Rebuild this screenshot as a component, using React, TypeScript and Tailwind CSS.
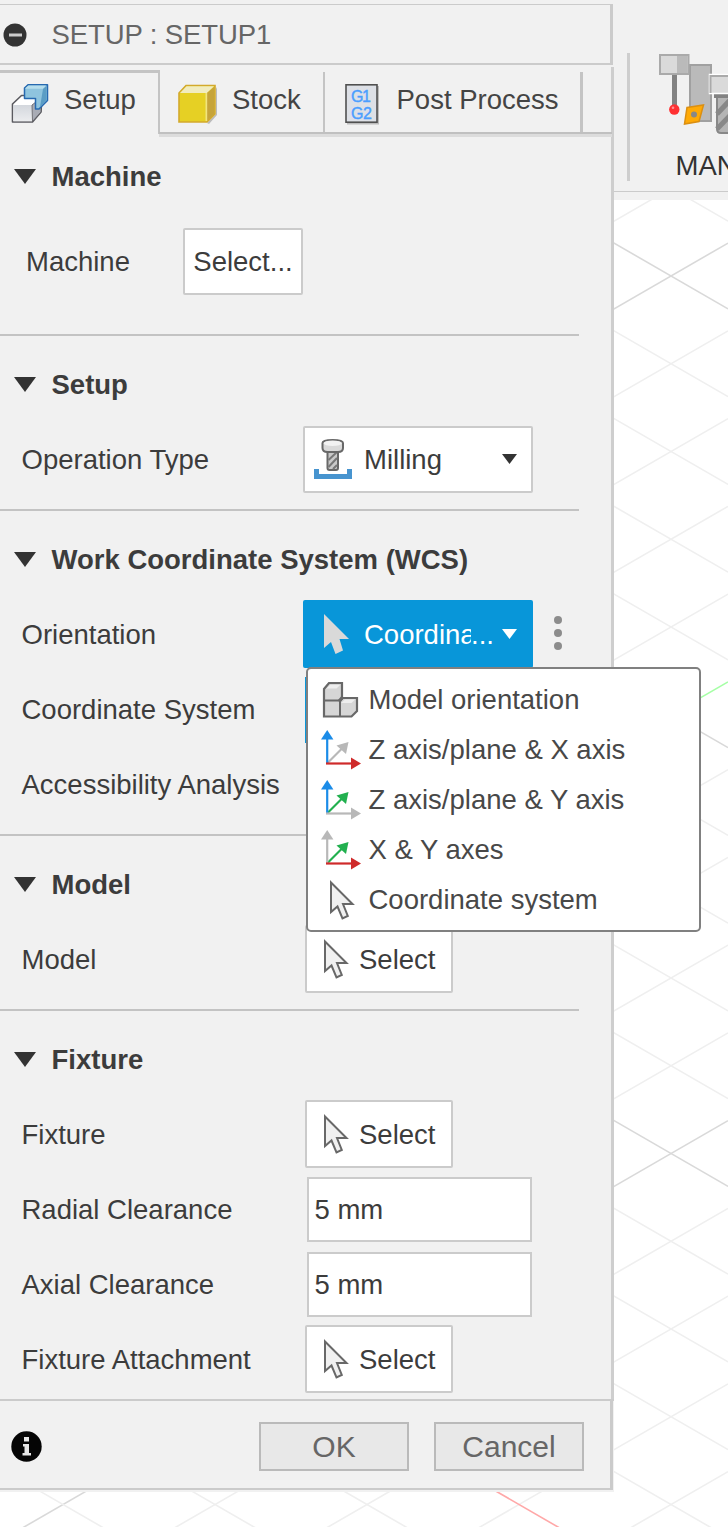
import type { ReactNode } from 'react'

const GRID_STEP = 87.75
const GRID_X = 671
const GRID_Y = 276
const SLOPE = 0.57735

const ORIENTATIONS = [
  { label: 'Model orientation', icon: <ModelIcon /> },
  { label: 'Z axis/plane & X axis', icon: <AxesIcon z="#1b8ce8" y="#b8b8b8" x="#cf2a2a" /> },
  { label: 'Z axis/plane & Y axis', icon: <AxesIcon z="#1b8ce8" y="#22b04f" x="#b8b8b8" /> },
  { label: 'X & Y axes', icon: <AxesIcon z="#b8b8b8" y="#22b04f" x="#cf2a2a" /> },
  { label: 'Coordinate system', icon: <CursorIcon className="ml-[9px]" /> },
]

export default function App() {
  return (
    <div className="relative h-[1527px] w-[728px] overflow-hidden bg-white font-['Liberation_Sans',Arial,sans-serif] text-[27.5px] leading-[28px] text-[#3c3c3c]">
      <CanvasGrid />
      <div className="relative flex items-start">
        <SetupPanel />
        <Toolbar />
      </div>
    </div>
  )
}

function SetupPanel() {
  return (
    <div className="w-[614px] shrink-0 bg-[#f1f1f1]">
      <div className="h-1" />
      <header className="flex h-[61px] w-[613px] items-center border-t border-r-[3px] border-b-2 border-[#cbcbcb] pt-px pl-[3px] text-[#666]">
        <MinusIcon />
        <span className="ml-[24.5px] tracking-[-0.1px]">SETUP : SETUP1</span>
      </header>

      <div className="mt-[2px] border-r-[3px] border-[#cecece]">
        <Tabs />
        <section className="h-[196px] pt-px">
          <SectionTitle>Machine</SectionTitle>
          <div className="flex h-[96px] items-center pl-[26px]">
            <span className="w-[157px]">Machine</span>
            <button className="-mt-px h-[67px] w-[120px] rounded-[2px] border-2 border-[#cbcbcb] bg-white pt-px">
              Select...
            </button>
          </div>
        </section>

        <Section title="Setup">
          <Row label="Operation Type">
            <button className="ml-[-4px] -mt-px flex h-[67px] w-[230px] items-center rounded-[2px] border-2 border-[#cbcbcb] bg-white pl-[9px] text-left">
              <MillingIcon />
              <span className="mt-[2px] ml-[10px] w-[138px]">Milling</span>
              <Caret className="-mt-px h-[10px] w-[15px] text-[#333]" />
            </button>
          </Row>
        </Section>

        <Section title="Work Coordinate System (WCS)">
          <Row label="Orientation">
            <div className="relative z-10 ml-[-4px] -mt-px">
              <button className="flex h-[68px] w-[230px] items-center rounded-[2px] bg-[#0896d9] pl-[21px] text-left text-white">
                <CursorIcon solid />
                <span className="mt-px ml-[15px] flex w-[138px]">
                  <span className="w-[107px] overflow-hidden">Coordina</span>
                  <span>...</span>
                </span>
                <Caret className="h-[10px] w-[15px]" />
              </button>
              <OrientationMenu />
            </div>
            <div className="mt-[-4px] ml-[21px] flex flex-col gap-[5px]">
              <i className="size-2 rounded-full bg-[#8c8c8c]" />
              <i className="size-2 rounded-full bg-[#8c8c8c]" />
              <i className="size-2 rounded-full bg-[#8c8c8c]" />
            </div>
          </Row>
          <Row label="Coordinate System">
            <div className="ml-[-2px] h-[66px] w-[148px] border-2 border-[#0896d9] bg-white" />
          </Row>
          <Row label="Accessibility Analysis" />
        </Section>

        <Section title="Model">
          <Row label="Model">
            <SelectButton />
          </Row>
        </Section>

        <Section title="Fixture" last>
          <Row label="Fixture">
            <SelectButton />
          </Row>
          <Row label="Radial Clearance">
            <ValueField value="5 mm" />
          </Row>
          <Row label="Axial Clearance">
            <ValueField value="5 mm" />
          </Row>
          <Row label="Fixture Attachment">
            <SelectButton />
          </Row>
        </Section>
      </div>

      <footer className="flex h-[93px] flex-col border-t-2 border-[#cbcbcb]">
        <div className="flex h-[89px] w-[613px] items-center border-r-[3px] border-b-2 border-[#cbcbcb] pt-[3px] pl-[11px] text-[30px] text-[#666]">
          <InfoIcon />
          <button className="ml-[217px] h-[49px] w-[150px] border-2 border-[#bababa] bg-[#e8e8e8] pt-px">
            OK
          </button>
          <button className="ml-[25px] h-[49px] w-[150px] border-2 border-[#bababa] bg-[#e8e8e8] pt-px">
            Cancel
          </button>
        </div>
      </footer>
    </div>
  )
}

function Tabs() {
  return (
    <nav className="flex h-[71px] items-start pt-[3px] text-[#444]">
      <div className="flex h-[64px] w-[160px] border-t-[3px] border-r-2 border-[#c4c4c4] pt-[11px] pl-[11px]">
        <SetupIcon />
        <span className="mt-[2px] ml-[15px]">Setup</span>
      </div>
      <div className="mr-[-1px] flex-1">
        <div className="flex h-[62px] pt-[2px]">
          <div className="flex h-[60px] w-[165px] border-r-2 border-[#c4c4c4] pt-[12px] pl-[18px]">
            <StockIcon />
            <span className="mt-[2px] ml-[15px]">Stock</span>
          </div>
          <div className="flex h-[60px] w-[258px] border-r-[3px] border-[#c4c4c4] pt-[12px] pl-[20px]">
            <PostIcon />
            <span className="mt-[2px] ml-[17.5px]">Post Process</span>
          </div>
        </div>
        <div className="-ml-px h-[5px] border-t-2 border-[#c0c0c0] bg-[#dcdcdc]" />
      </div>
    </nav>
  )
}

function Section({ title, children, last }: { title: string; children: ReactNode; last?: boolean }) {
  return (
    <section className={last ? 'pb-[2px]' : 'pb-[12px]'}>
      <div className="h-[2px] w-[579px] bg-[#c3c3c3]" />
      <div className="pt-[11px]">
        <SectionTitle>{title}</SectionTitle>
        {children}
      </div>
    </section>
  )
}

function SectionTitle({ children }: { children: ReactNode }) {
  return (
    <h2 className="flex h-[75px] items-center pl-[14px] font-bold">
      <Caret className="h-[15px] w-[22px] text-[#333]" />
      <span className="ml-[15.5px]">{children}</span>
    </h2>
  )
}

function Row({ label, children }: { label: string; children?: ReactNode }) {
  return (
    <div className="flex h-[75px] items-center pl-[21.5px]">
      <span className="w-[285.5px] shrink-0 whitespace-nowrap">{label}</span>
      {children}
    </div>
  )
}

function SelectButton() {
  return (
    <button className="ml-[-2px] -mt-px flex h-[68px] w-[148px] items-center rounded-[2px] border-2 border-[#cbcbcb] bg-white pl-[17px]">
      <CursorIcon />
      <span className="mt-px ml-[10px]">Select</span>
    </button>
  )
}

function ValueField({ value }: { value: string }) {
  return (
    <div className="flex h-[65px] w-[225px] items-center border-2 border-[#cbcbcb] bg-white pl-[5.5px]">
      {value}
    </div>
  )
}

function OrientationMenu() {
  return (
    <ul className="absolute top-[67px] left-[3px] h-[265px] w-[395px] rounded-[5px] border-2 border-[#808080] bg-white pt-[6px] text-[#484848]">
      {ORIENTATIONS.map((item) => (
        <li key={item.label} className="flex h-[50px] items-center pl-[13px]">
          <span className="w-[47.5px]">{item.icon}</span>
          <span>{item.label}</span>
        </li>
      ))}
    </ul>
  )
}

function Toolbar() {
  return (
    <div className="h-[200px] flex-1 overflow-hidden bg-[#f1f1f1]">
      <div className="flex h-[192px] border-b border-[#cbcbcb] pt-[53px]">
        <div className="ml-[13px] h-[128px] w-[3px] shrink-0 bg-[#cecece]" />
        <div className="ml-[29px] shrink-0">
          <ManageIcon />
          <div className="mt-[17px] ml-[16.5px] w-[120px] text-[#333]">MANAGE</div>
        </div>
      </div>
    </div>
  )
}

function CanvasGrid() {
  const rows = Array.from({ length: 30 }, (_, i) => i - 9)
  const left = GRID_X * SLOPE
  const right = (728 - GRID_X) * SLOPE
  return (
    <svg className="absolute inset-0" width="728" height="1527" fill="none">
      {rows.map((k) => {
        const y = GRID_Y + k * GRID_STEP
        const base = k % 5 === 0 ? '#d9d9d9' : '#efefef'
        return (
          <g key={k} strokeWidth="1.6">
            <path d={`M0 ${y - left}L728 ${y + right}`} stroke={k === 15 ? '#ffa8a8' : base} />
            <path d={`M0 ${y + left}L728 ${y - right}`} stroke={k === 5 ? '#a6ffa6' : base} />
          </g>
        )
      })}
    </svg>
  )
}

function Caret({ className }: { className: string }) {
  return (
    <svg className={className} viewBox="0 0 22 15" preserveAspectRatio="none" fill="currentColor">
      <path d="M0 0H22L11 15Z" />
    </svg>
  )
}

function CursorIcon({ solid, className = '' }: { solid?: boolean; className?: string }) {
  return (
    <svg className={className} width="25" height="40" viewBox="0 0 25 40">
      {solid ? (
        <path d="M0 0L25 25H15.5L19 36.5L11.5 40L7 28L0 34Z" fill="#d9d9d9" />
      ) : (
        <path
          d="M1 2.5L22.5 24H13L17.8 36L12.5 38.5L7.5 26.5L1 32Z"
          fill="#f0f0f0"
          stroke="#686868"
          strokeWidth="2"
        />
      )}
    </svg>
  )
}

function MinusIcon() {
  return (
    <svg width="24" height="24" viewBox="0 0 24 24">
      <circle cx="12" cy="12" r="11.5" fill="#333" />
      <rect x="6" y="10.5" width="13" height="3" fill="#ccc" />
    </svg>
  )
}

function InfoIcon() {
  return (
    <svg width="31" height="31" viewBox="0 0 31 31">
      <circle cx="15.5" cy="15.5" r="15.2" fill="#050505" />
      <path d="M13 6H18V10.5H13ZM12 13H18V22H20V24.5H11.5V22H13.5V15.5H12Z" fill="#e6e6e6" />
    </svg>
  )
}

function SetupIcon() {
  return (
    <svg width="38" height="41" viewBox="0 0 38 41">
      <defs>
        <linearGradient id="face" x1="0" y1="0" x2="0" y2="1">
          <stop offset="0" stopColor="#d3d7dd" />
          <stop offset="1" stopColor="#ebecee" />
        </linearGradient>
      </defs>
      <path
        d="M1.5 20L10.5 11.5H31L30 28L21.5 38H1.5Z"
        fill="#fff"
        stroke="#5a5a60"
        strokeWidth="1.6"
        strokeLinejoin="round"
      />
      <path d="M2.3 21H21V37.2H2.3Z" fill="url(#face)" />
      <path d="M21 21L30 14V28L21.5 37.5Z" fill="#a9acb5" stroke="#5a5a60" strokeWidth="0.8" />
      <path
        d="M13.5 4L17 .8H36.5V16.5L28 25H24.5V14.5H13.5Z"
        fill="#8fc4de"
        stroke="#2769b0"
        strokeWidth="1.5"
        strokeLinejoin="round"
      />
      <path d="M14.5 4L17.5 1.6H35L32 4.8H14.5Z" fill="#b6deed" />
      <path d="M32 5L35.5 2V16L29 23Z" fill="#5b9dc5" />
    </svg>
  )
}

function StockIcon() {
  return (
    <svg width="39" height="41" viewBox="0 0 39 41">
      <path d="M29 39L38 30V3L39 5V31L31 40Z" fill="#bbb" />
      <path d="M1 9L8 1.5H37V30L29 38H1Z" fill="#e6d024" stroke="#d3a92c" strokeWidth="1.6" />
      <path d="M2 9L8.5 2.3H36L29 9Z" fill="#f1ecbf" />
      <path d="M29 9L36.5 2.5V30L29 37.5Z" fill="#c6a43a" />
      <path d="M27.5 9H29.2V37H27.5Z" fill="#f1e57d" />
    </svg>
  )
}

function PostIcon() {
  return (
    <svg width="34" height="41" viewBox="0 0 34 41">
      <rect x="2" y="2" width="32" height="38.5" fill="#bbb" />
      <rect x="1" y=".8" width="31" height="37.4" fill="#dde0e6" stroke="#505050" strokeWidth="1.6" />
      <g
        fill="#4a9eff"
        stroke="#4a9eff"
        strokeWidth=".4"
        fontFamily="Liberation Sans, sans-serif"
        fontSize="16"
      >
        <text x="6" y="18" textLength="20">G1</text>
        <text x="6" y="34.5" textLength="21">G2</text>
      </g>
    </svg>
  )
}

function MillingIcon() {
  return (
    <svg className="-mt-px" width="40" height="42" viewBox="0 0 40 42">
      <path d="M0 31H5V36H33V31H38V41H0Z" fill="#4794cf" />
      <rect x="13.5" y="11" width="10.5" height="21" rx="2" fill="#c9c9c9" stroke="#686868" strokeWidth="2" />
      <path d="M14.5 22L23 14M14.5 29L23 20M19 31L23 27" stroke="#777" strokeWidth="2" />
      <path
        d="M8.5 5Q8.5 2 18.7 2T29 5V10Q29 14 24 14H13.5Q8.5 14 8.5 10Z"
        fill="#d9d9d9"
        stroke="#686868"
        strokeWidth="2"
      />
      <ellipse cx="18.7" cy="5.2" rx="9" ry="2.8" fill="#f2f2f2" />
    </svg>
  )
}

function ModelIcon() {
  return (
    <svg width="38" height="38" viewBox="0 0 38 38">
      <path
        d="M3 8L8 2H21V17H36V30L30.5 35.5H3Z"
        fill="#d6d6d6"
        stroke="#686868"
        strokeWidth="2.2"
      />
      <path d="M5 8L9 4H19L15.5 7.5H5ZM20 22L24 18.5H34L30.5 22Z" fill="#eee" />
      <path d="M3 19.5H19V35M19 19.5L22 17" fill="none" stroke="#686868" strokeWidth="2" />
      <path d="M16.5 19.5L20 15.5L22.5 17.5L19.5 21.5Z" fill="#686868" />
    </svg>
  )
}

function AxesIcon({ x, y, z }: { x: string; y: string; z: string }) {
  return (
    <svg width="41" height="40" viewBox="0 0 41 40">
      <path d="M6.5 33L23 16.5" stroke={y} strokeWidth="2.2" />
      <path d="M27.5 12L15.5 15.5L25 24Z" fill={y} />
      <path d="M6.2 34V9" stroke={z} strokeWidth="2.2" />
      <path d="M0 9.5L6.2 0L12.4 9.5Z" fill={z} />
      <path d="M5 33.5H32" stroke={x} strokeWidth="2.2" />
      <path d="M30 27.5L40 33.5L30 39.5Z" fill={x} />
    </svg>
  )
}

function ManageIcon() {
  return (
    <svg width="90" height="82" viewBox="0 0 90 82">
      <rect x="31" y="12" width="21" height="56" fill="#bababa" stroke="#a0a0a0" strokeWidth="2" />
      <rect x="13" y="22" width="5" height="31" fill="#828282" />
      <rect x="1" y="2" width="28.5" height="19" fill="#dadada" stroke="#aaa" strokeWidth="2" />
      <path d="M18 3H28.5V20H18Z" fill="#bababa" />
      <circle cx="15.3" cy="56.5" r="5.2" fill="#ff3032" />
      <circle cx="14" cy="54.8" r="1.3" fill="#ff9090" />
      <path d="M28 54.5L44.5 52L40 68.5L25.5 71Z" fill="#ffaa06" stroke="#db8f11" strokeWidth="1.5" />
      <circle cx="35" cy="61.5" r="3" fill="#888" />
      <path d="M58 40H90V80H62Q58 80 58 76Z" fill="#b5b5b5" stroke="#888" strokeWidth="2" />
      <path d="M58 61L73 45M58 76L81 52" stroke="#888" strokeWidth="5" />
      <path d="M55 39H90V45H55Z" fill="#828282" />
      <rect x="50.5" y="21.5" width="40" height="19" fill="#dadada" stroke="#fff" strokeWidth="1.5" />
      <path d="M51.5 40V23H90" fill="none" stroke="#aaa" strokeWidth="2" />
    </svg>
  )
}
